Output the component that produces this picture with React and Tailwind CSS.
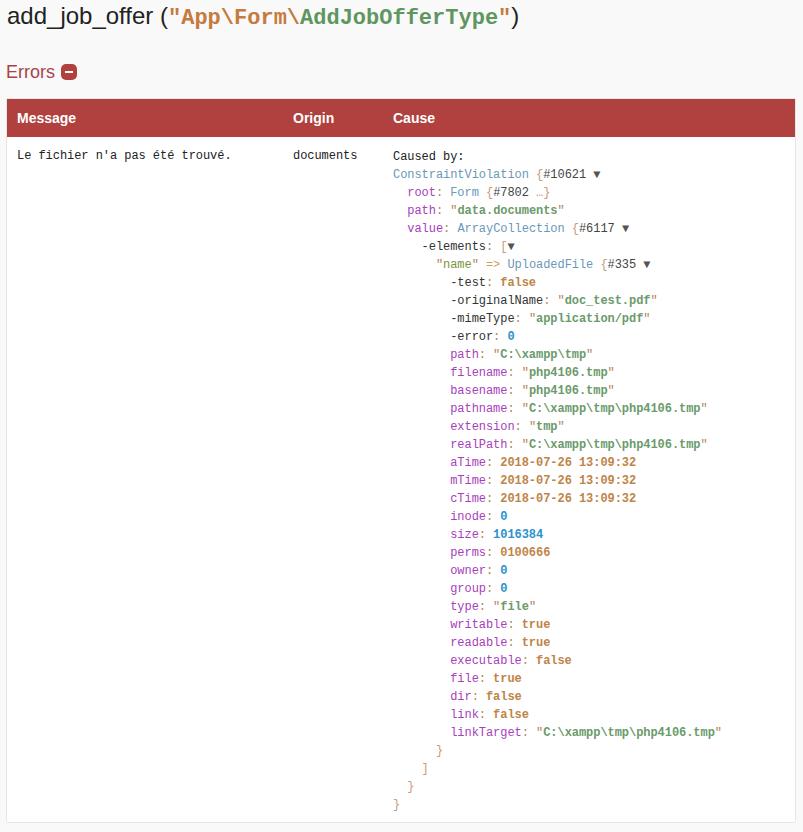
const mono = 'font-["Liberation_Mono",monospace]';

const Key = ({ children }) => <span className="text-[#a840bb]">{children}</span>;
const Plain = ({ children }) => <span className="text-[#333333]">{children}</span>;
const Str = ({ children }) => (
    <span className="font-bold text-[#6b9a6b]">
        <span className="font-normal text-[#b5835a]">"</span>
        {children}
        <span className="font-normal text-[#b5835a]">"</span>
    </span>
);
const Cls = ({ children }) => <span className="text-[#6a98b8]">{children}</span>;
const Brace = ({ children }) => <span className="text-[#c79a78]">{children}</span>;
const Kw = ({ children }) => <span className="font-bold text-[#c08448]">{children}</span>;
const Num = ({ children }) => <span className="font-bold text-[#2a93cc]">{children}</span>;
const Arrow = () => <span className="text-[#555555]"> ▼</span>;

const Line = ({ indent = 0, children }) => (
    <div className="h-[18px] whitespace-pre" style={{ paddingLeft: indent * 7.15 }}>
        {children}
    </div>
);

const Prop = ({ indent, name, protectedProp, children }) => (
    <Line indent={indent}>
        {protectedProp ? <Plain>-{name}</Plain> : <Key>{name}</Key>}
        <span className="text-[#b08a5a]">: </span>
        {children}
    </Line>
);

const fileProps = [
    ['path', <Str>C:\xampp\tmp</Str>],
    ['filename', <Str>php4106.tmp</Str>],
    ['basename', <Str>php4106.tmp</Str>],
    ['pathname', <Str>C:\xampp\tmp\php4106.tmp</Str>],
    ['extension', <Str>tmp</Str>],
    ['realPath', <Str>C:\xampp\tmp\php4106.tmp</Str>],
    ['aTime', <Kw>2018-07-26 13:09:32</Kw>],
    ['mTime', <Kw>2018-07-26 13:09:32</Kw>],
    ['cTime', <Kw>2018-07-26 13:09:32</Kw>],
    ['inode', <Num>0</Num>],
    ['size', <Num>1016384</Num>],
    ['perms', <Kw>0100666</Kw>],
    ['owner', <Num>0</Num>],
    ['group', <Num>0</Num>],
    ['type', <Str>file</Str>],
    ['writable', <Kw>true</Kw>],
    ['readable', <Kw>true</Kw>],
    ['executable', <Kw>false</Kw>],
    ['file', <Kw>true</Kw>],
    ['dir', <Kw>false</Kw>],
    ['link', <Kw>false</Kw>],
    ['linkTarget', <Str>C:\xampp\tmp\php4106.tmp</Str>],
];

const App = () => {
    return (
        <div className='h-[832px] overflow-hidden bg-[#f9f9f9] px-[7px] font-["Liberation_Sans",sans-serif] text-[#222222]'>
            <h2 className="pt-px text-[24px] leading-[30px] whitespace-pre">
                add_job_offer (
                <span className={`${mono} text-[22px] font-bold text-[#c57b3d]`}>
                    "App\Form\<span className="text-[#5f965f]">AddJobOfferType</span>"
                </span>
                )
            </h2>

            <div className="mt-[26px] -ml-px flex h-[24px] items-center gap-[6px] text-[18px] text-[#a6444b]">
                <span>Errors</span>
                <span className="flex h-[16px] w-[16px] items-center justify-center rounded-[5px] bg-[#b0413e]">
                    <span className="h-[2px] w-[8px] bg-white"></span>
                </span>
            </div>

            <div className="mt-[15px] h-[723px] w-[788px] bg-white shadow-[0_0_1px_rgba(128,128,128,0.9)]">
                <div className="flex h-[38px] items-center bg-[#b0413e] text-sm font-bold text-white">
                    <div className="w-[286px] pl-[10px]">Message</div>
                    <div className="w-[100px]">Origin</div>
                    <div>Cause</div>
                </div>

                <div className={`flex pt-[10px] text-[12px] leading-[18px] tracking-[-0.05px] text-[#222222] ${mono}`}>
                    <div className="w-[286px] pl-[10px]">Le fichier n'a pas été trouvé.</div>
                    <div className="w-[100px]">documents</div>
                    <div className="flex-1 pt-px">
                        <Line>Caused by:</Line>
                        <Line>
                            <Cls>ConstraintViolation</Cls> <Brace>{'{'}</Brace><span className="text-[#444444]">#10621</span><Arrow />
                        </Line>
                        <Prop indent={2} name="root">
                            <Cls>Form</Cls> <Brace>{'{'}</Brace><span className="text-[#444444]">#7802</span> <Brace>…{'}'}</Brace>
                        </Prop>
                        <Prop indent={2} name="path">
                            <Str>data.documents</Str>
                        </Prop>
                        <Prop indent={2} name="value">
                            <Cls>ArrayCollection</Cls> <Brace>{'{'}</Brace><span className="text-[#444444]">#6117</span><Arrow />
                        </Prop>
                        <Prop indent={4} name="elements" protectedProp>
                            <Brace>[</Brace>
                            <span className="text-[#555555]">▼</span>
                        </Prop>
                        <Line indent={6}>
                            <span className="text-[#b5835a]">"</span>
                            <span className="text-[#7d9340]">name</span>
                            <span className="text-[#b5835a]">"</span>
                            <span className="text-[#c8a060]"> =&gt; </span>
                            <Cls>UploadedFile</Cls> <Brace>{'{'}</Brace><span className="text-[#444444]">#335</span><Arrow />
                        </Line>
                        <Prop indent={8} name="test" protectedProp>
                            <Kw>false</Kw>
                        </Prop>
                        <Prop indent={8} name="originalName" protectedProp>
                            <Str>doc_test.pdf</Str>
                        </Prop>
                        <Prop indent={8} name="mimeType" protectedProp>
                            <Str>application/pdf</Str>
                        </Prop>
                        <Prop indent={8} name="error" protectedProp>
                            <Num>0</Num>
                        </Prop>
                        {fileProps.map(([name, value]) => (
                            <Prop key={name} indent={8} name={name}>
                                {value}
                            </Prop>
                        ))}
                        <Line indent={6}><Brace>{'}'}</Brace></Line>
                        <Line indent={4}><Brace>]</Brace></Line>
                        <Line indent={2}><Brace>{'}'}</Brace></Line>
                        <Line><Brace>{'}'}</Brace></Line>
                    </div>
                </div>
            </div>
        </div>
    );
};

export default App;
